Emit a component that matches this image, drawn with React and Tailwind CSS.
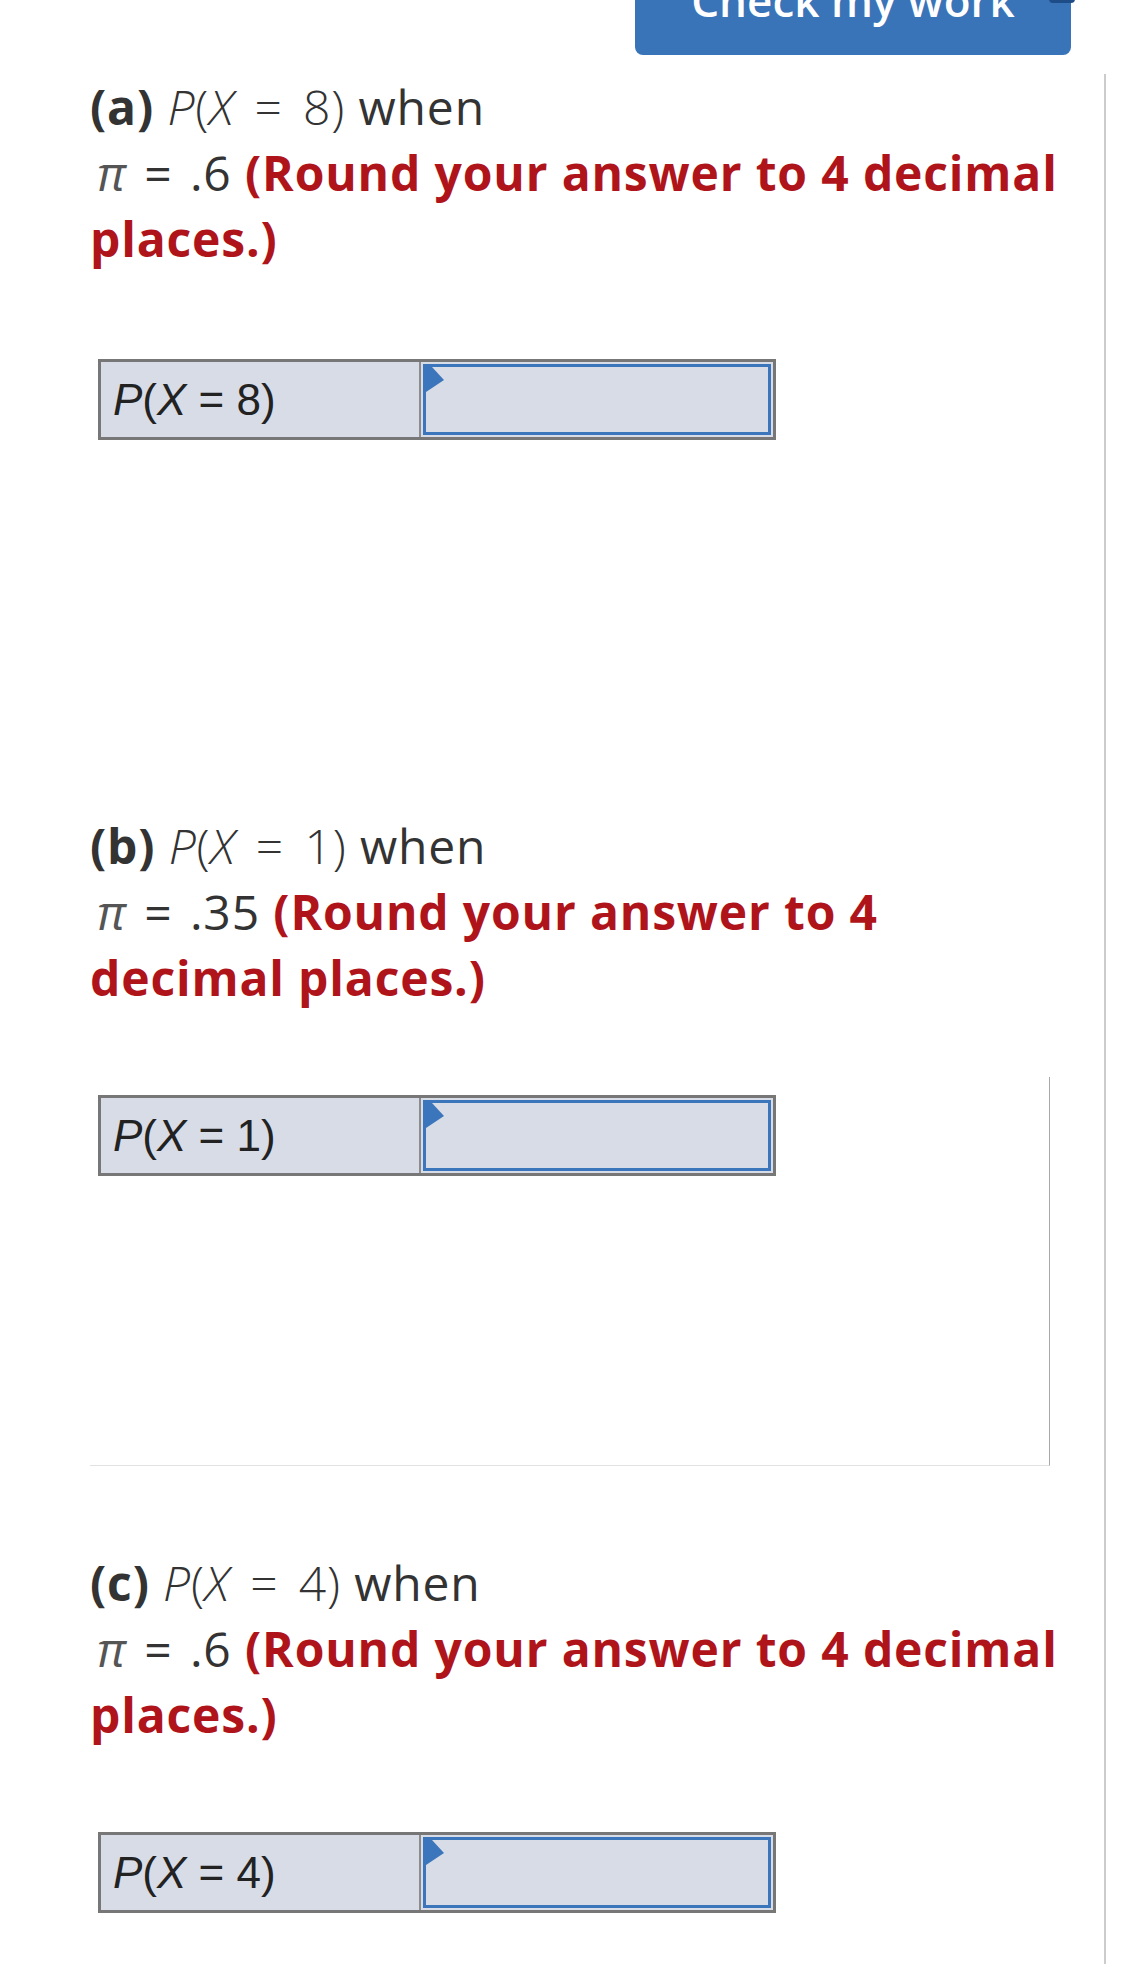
const parts = [
  { tag: "(a)", k: "8", pi: ".6", lines: ["(Round your answer to 4 decimal", "places.)"] },
  { tag: "(b)", k: "1", pi: ".35", lines: ["(Round your answer to 4", "decimal places.)"] },
  { tag: "(c)", k: "4", pi: ".6", lines: ["(Round your answer to 4 decimal", "places.)"] },
];

function Expr({ k }) {
  return (
    <span className="font-light">
      <i>P</i>(<i>X</i> <span className="mx-[7px]">=</span> {k})
    </span>
  );
}

function AnswerRow({ k }) {
  return (
    <div className="flex w-[678px] h-[81px] border-[3px] border-[#777] bg-[#d7dce6]">
      <div className="w-[320px] flex items-center pl-[12px] border-r-2 border-[#8c8c8c] font-['Liberation_Sans',Arial,sans-serif] text-[44px] text-[#222]">
        <i>P</i>(<i>X</i>&nbsp;= {k})
      </div>
      <div className="relative flex-1 m-[2px] border-[3px] border-[#3b75bb] bg-[#d7dce6]">
        <svg className="absolute left-0 top-0" width="20" height="26" viewBox="0 0 20 26">
          <polygon points="0,0 6,0 18,13 0,25" fill="#3b75bb" />
        </svg>
      </div>
    </div>
  );
}

function Question({ tag, k, pi, lines }) {
  return (
    <div className="text-[48px] leading-[66px] tracking-[0.85px] text-[#333]">
      <div>
        <b className="font-bold">{tag}</b> <Expr k={k} /> when
      </div>
      <div>
        <i className="ml-[7px] text-[#555]">π</i> <span className="mx-[4px]">=</span> {pi}{" "}
        <span className="font-bold text-[#b0141b]">{lines[0]}</span>
      </div>
      <div className="font-bold text-[#b0141b]">{lines[1]}</div>
    </div>
  );
}

export default function App() {
  return (
    <div className="relative w-[1139px] h-[1964px] overflow-hidden bg-white font-['Open_Sans',sans-serif]">
      <div className="relative ml-[635px] mt-[-55px] w-[436px] h-[110px] rounded-lg bg-[#3a74b8] flex items-center justify-center text-white text-[44px] font-semibold">
        Check my work
        <span className="absolute right-[-4px] top-[54px] w-[26px] h-[4px] rounded-b-full bg-[#1e4c86]" />
      </div>

      <div className="mt-[28px] w-[1106px] h-[1900px] border-r-2 border-[#cccccc] pl-[90px]">
        <div className="mt-[-9px]">
          <Question {...parts[0]} />
          <div className="mt-[87px] ml-[8px]">
            <AnswerRow k="8" />
          </div>
        </div>

        <div className="mt-[373px]">
          <Question {...parts[1]} />
          <div className="mt-[66px] w-[960px] h-[389px] border-r border-b border-r-[#a8a8a8] border-b-[#e2e2e2] pt-[18px] pl-[8px]">
            <AnswerRow k="1" />
          </div>
        </div>

        <div className="mt-[84px]">
          <Question {...parts[2]} />
          <div className="mt-[84px] ml-[8px]">
            <AnswerRow k="4" />
          </div>
        </div>
      </div>
    </div>
  );
}
